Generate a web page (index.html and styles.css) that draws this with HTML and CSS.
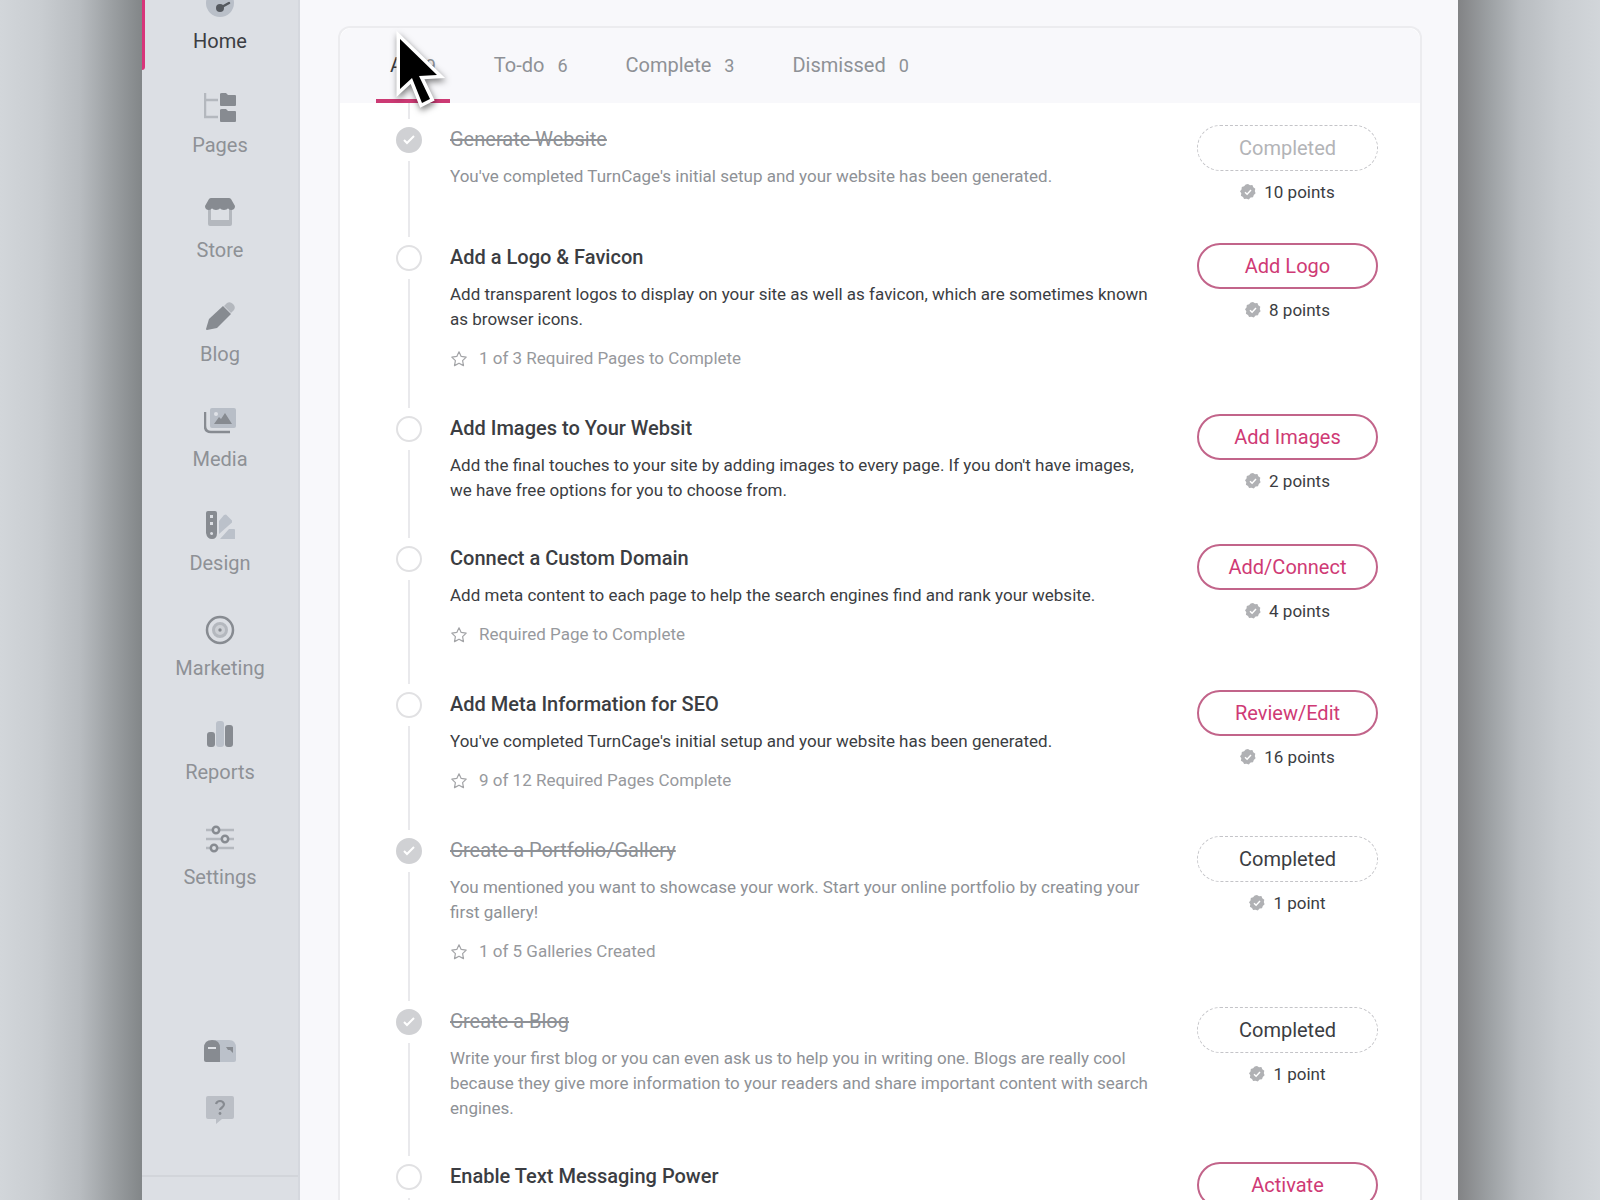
FILE: index.html
```
<!DOCTYPE html>
<html lang="en">
<head>
<meta charset="utf-8">
<title>TurnCage - Home</title>
<link rel="stylesheet" href="styles.css">
</head>

<body>

<!-- shared symbols -->
<svg class="defs" width="0" height="0">
<symbol id="badge" viewBox="0 0 16 16">
<path fill="#b0b1b4" d="M8 0l2 1.3 2.4-.2.9 2.2 2 1.4L14.800 7 15.600 9.300 13.800 10.900 13 13.200 10.600 13.600 8.800 15.500 6.500 14.700 4.100 15 3 12.900.9 11.700 1.300 9.300 0 7.300 1.500 5.400 1.800 3 4.100 2.200 5.700.5z"/>
<path fill="none" stroke="#fff" stroke-width="1.500" d="M5 8.200l2.100 2 3.900-4.100"/>
</symbol>
<symbol id="star" viewBox="0 0 18 18">
<path fill="none" stroke="#a3a4a7" stroke-width="1.200" stroke-linejoin="round" d="M9 1.800l2.200 4.600 5 .7-3.600 3.500.9 5L9 13.200l-4.500 2.400.9-5L1.800 7.100l5-.7z"/>
</symbol>
</svg>

<div class="app">

<div class="sidebar">
<nav class="nav">
<a href="#" class="active">
<svg width="32" height="32" viewBox="0 0 32 32"><circle cx="16" cy="16" r="14" fill="#b9bfc8"/><circle cx="16" cy="21" r="4" fill="#55595f"/><path d="M16 21l9-5" stroke="#55595f" stroke-width="2.500" stroke-linecap="round"/></svg>
<span>Home</span></a>
<a href="#">
<svg width="32" height="32" viewBox="0 0 32 32"><path d="M1 2v24h13M1 9h13" fill="none" stroke="#b4b8be" stroke-width="2.500"/><path fill="#878b91" d="M18 2h4l2 2h7q1 0 1 1v9q0 1-1 1H17q-1 0-1-1V3q0-1 2-1zM18 18h4l2 2h7q1 0 1 1v9q0 1-1 1H17q-1 0-1-1V19q0-1 2-1z"/></svg>
<span>Pages</span></a>
<a href="#">
<svg width="32" height="32" viewBox="0 0 32 32"><path fill="#b4b8be" fill-rule="evenodd" d="M4 12h24v16q0 2-2 2H6q-2 0-2-2zM7 13v11h18V13z"/><path fill="#878b91" d="M5 3q1-1 2-1h18q1 0 2 1l4 7q0 4-4 4-2 0-3-2-1 2-4 2-3 0-4-2-1 2-4 2-3 0-4-2-1 2-3 2-4 0-4-4z"/></svg>
<span>Store</span></a>
<a href="#">
<svg width="32" height="32" viewBox="0 0 32 32"><path fill="#b4b8be" d="M20 6l3-3q3-2 6 1 3 3 1 6l-3 3z"/><path fill="#878b91" d="M19 6l8 8-14 14-10 2q-1 0-1-1l3-10z"/></svg>
<span>Blog</span></a>
<a href="#">
<svg width="32" height="32" viewBox="0 0 32 32"><rect x="6" y="3" width="26" height="20" rx="2" fill="#b8bec7"/><circle cx="12" cy="9" r="2" fill="#dfe2e7"/><path fill="#878b91" d="M10 19l5-7 2 2 4-6 7 11z"/><path d="M1 7v14q0 6 6 6h19" fill="none" stroke="#878b91" stroke-width="2.500"/></svg>
<span>Media</span></a>
<a href="#">
<svg width="32" height="32" viewBox="0 0 32 32"><path fill="#bbc1ca" d="M15 12l5-6 2-.5 6 6v2L15 25zM16 30l9-10h5q1 0 1 1v9z"/><path fill="#878b91" fill-rule="evenodd" d="M4 2h7q2 0 2 2v20q0 6-5 6t-6-6V4q0-2 2-2zM6 6v3h3V6zM6 13v3h3v-3zM7.500 23a1.500 1.500 0 1 0 .1 3 1.500 1.500 0 1 0 0-3z"/></svg>
<span>Design</span></a>
<a href="#">
<svg width="32" height="32" viewBox="0 0 32 32"><circle cx="16" cy="16" r="13" fill="none" stroke="#878b91" stroke-width="2.500"/><circle cx="16" cy="16" r="6.500" fill="#cdd0d5" stroke="#b4b8be" stroke-width="3"/><circle cx="16" cy="16" r="1.700" fill="#878b91"/></svg>
<span>Marketing</span></a>
<a href="#">
<svg width="32" height="32" viewBox="0 0 32 32"><rect x="3" y="14" width="8" height="15" rx="3" fill="#878b91"/><rect x="12" y="3" width="8" height="26" rx="3" fill="#bbc1ca"/><rect x="21" y="7" width="8" height="22" rx="3" fill="#878b91"/></svg>
<span>Reports</span></a>
<a href="#">
<svg width="32" height="32" viewBox="0 0 32 32"><path stroke="#b4b8be" stroke-width="2.500" d="M2 7h28M2 16h28M2 25h28"/><g fill="#dcdfe4" stroke="#878b91" stroke-width="2.500"><circle cx="12" cy="7" r="3.200"/><circle cx="21" cy="16" r="3.200"/><circle cx="10" cy="25" r="3.200"/></g></svg>
<span>Settings</span></a>
</nav>

<div class="tools">
<a href="#" aria-label="Mailbox">
<svg width="32" height="26" viewBox="0 0 32 26"><path fill="#bbc1ca" d="M8 2h17q7 0 7 8v12q0 2-2 2H14z"/><path fill="#878b91" d="M0 10q0-8 8-8t8 8v14H2q-2 0-2-2z"/><path fill="#dfe2e7" d="M4 9h8v2H4z"/><path fill="#878b91" d="M22 9h7v6l-3-3h-2z"/></svg></a>
<a href="#" aria-label="Help">
<svg width="28" height="28" viewBox="0 0 28 28"><path fill="#bbbfc6" d="M2 0h24q2 0 2 2v19q0 2-2 2H16l-6 5v-5H2q-2 0-2-2V2q0-2 2-2z"/><path d="M10 8q1-3 4-3t4 3q0 2-2 3.500T14 14" fill="none" stroke="#878b91" stroke-width="2.200"/><circle cx="14" cy="17.500" r="1.400" fill="#878b91"/></svg></a>
</div>
<div class="account"></div>
</div>

<div class="main">
<div class="card">

<div class="tabs">
<a href="#" class="active">All <span>9</span></a>
<a href="#">To-do <span>6</span></a>
<a href="#">Complete <span>3</span></a>
<a href="#">Dismissed <span>0</span></a>
</div>

<ul class="tasks">
<li class="done">
<div class="mark"><i><svg width="12" height="10" viewBox="0 0 12 10"><path d="M1 5l3 3 7-7"/></svg></i></div>
<div class="text">
<h3>Generate Website</h3>
<p>You've completed TurnCage's initial setup and your website has been generated.</p>
</div>
<div class="action"><button type="button" class="completed" disabled>Completed</button>
<div class="points"><svg width="16" height="16"><use href="#badge"/></svg>10 points</div></div>
</li>

<li>
<div class="mark"><i></i></div>
<div class="text">
<h3>Add a Logo &amp; Favicon</h3>
<p>Add transparent logos to display on your site as well as favicon, which are sometimes known as browser icons.</p>
<div class="note"><svg width="18" height="18"><use href="#star"/></svg>1 of 3 Required Pages to Complete</div>
</div>
<div class="action"><button type="button">Add Logo</button>
<div class="points"><svg width="16" height="16"><use href="#badge"/></svg>8 points</div></div>
</li>

<li>
<div class="mark"><i></i></div>
<div class="text">
<h3>Add Images to Your Websit</h3>
<p>Add the final touches to your site by adding images to every page. If you don't have images, we have free options for you to choose from.</p>
</div>
<div class="action"><button type="button">Add Images</button>
<div class="points"><svg width="16" height="16"><use href="#badge"/></svg>2 points</div></div>
</li>

<li>
<div class="mark"><i></i></div>
<div class="text">
<h3>Connect a Custom Domain</h3>
<p>Add meta content to each page to help the search engines find and rank your website.</p>
<div class="note"><svg width="18" height="18"><use href="#star"/></svg>Required Page to Complete</div>
</div>
<div class="action"><button type="button">Add/Connect</button>
<div class="points"><svg width="16" height="16"><use href="#badge"/></svg>4 points</div></div>
</li>

<li>
<div class="mark"><i></i></div>
<div class="text">
<h3>Add Meta Information for SEO</h3>
<p>You've completed TurnCage's initial setup and your website has been generated.</p>
<div class="note"><svg width="18" height="18"><use href="#star"/></svg>9 of 12 Required Pages Complete</div>
</div>
<div class="action"><button type="button">Review/Edit</button>
<div class="points"><svg width="16" height="16"><use href="#badge"/></svg>16 points</div></div>
</li>

<li class="done">
<div class="mark"><i><svg width="12" height="10" viewBox="0 0 12 10"><path d="M1 5l3 3 7-7"/></svg></i></div>
<div class="text">
<h3>Create a Portfolio/Gallery</h3>
<p>You mentioned you want to showcase your work. Start your online portfolio by creating your first gallery!</p>
<div class="note"><svg width="18" height="18"><use href="#star"/></svg>1 of 5 Galleries Created</div>
</div>
<div class="action"><button type="button" class="completed">Completed</button>
<div class="points"><svg width="16" height="16"><use href="#badge"/></svg>1 point</div></div>
</li>

<li class="done">
<div class="mark"><i><svg width="12" height="10" viewBox="0 0 12 10"><path d="M1 5l3 3 7-7"/></svg></i></div>
<div class="text">
<h3>Create a Blog</h3>
<p>Write your first blog or you can even ask us to help you in writing one. Blogs are really cool because they give more information to your readers and share important content with search engines.</p>
</div>
<div class="action"><button type="button" class="completed">Completed</button>
<div class="points"><svg width="16" height="16"><use href="#badge"/></svg>1 point</div></div>
</li>

<li>
<div class="mark"><i></i></div>
<div class="text">
<h3>Enable Text Messaging Power</h3>
</div>
<div class="action"><button type="button">Activate</button></div>
</li>
</ul>

</div>
</div>

</div>

<svg class="cursor" width="56" height="84" viewBox="0 0 56 84"><path d="M7 9v50l12-11 10 25 8-4-11-23 18-1z"/></svg>

</body>
</html>
```

FILE: styles.css
```
* { box-sizing: border-box; }

body {
  margin: 0;
  height: 100vh;
  overflow: hidden;
  font-family: Roboto, Arial, sans-serif;
  font-size: 17px;
  color: #3b3d42;
  /* soft shade on both sides of the app */
  background: linear-gradient(90deg,
    #d2d6da 0, #c9cdd1 40px, #b8bcc0 80px, #9da1a4 110px, #828688 142px,
    #828385 calc(100% - 142px), #9da1a4 calc(100% - 110px), #b8bcc0 calc(100% - 80px),
    #c9cdd1 calc(100% - 40px), #d2d6da 100%);
}
a { color: inherit; text-decoration: none; }
.defs { position: absolute; }

.app {
  display: flex;
  height: 100vh;
  margin: 0 142px;
  background: #f8f8fb;
}

/* sidebar */
.sidebar {
  flex: 0 0 158px;
  display: flex;
  flex-direction: column;
  height: calc(100vh + 17px);
  margin-top: -17px;
  background: #dcdfe4;
  border-right: 2px solid #d5d8de;
}
.nav {
  flex: 1;
  display: grid;
  grid-auto-rows: 1fr;
}
.nav a {
  position: relative;
  display: flex;
  flex-direction: column;
  align-items: center;
  gap: 10px;
  padding-top: 4px;
  font-size: 20px;
  line-height: 24px;
  color: #8e9196;
}
.nav a.active { color: #3b3d42; }
.nav a.active:before {
  content: "";
  position: absolute;
  top: 0;
  left: 0;
  width: 3px;
  height: 87px;
  background: #d8357a;
  border-radius: 0 0 3px 0;
}
.tools {
  display: flex;
  flex-direction: column;
  align-items: center;
  gap: 32px;
  height: 252px;
  padding-top: 115px;
}
.tools a { display: flex; }
.account {
  height: 25px;
  border-top: 2px solid #d2d5da;
}

/* task card */
.main {
  flex: 1;
  padding: 26px 36px 0 38px;
}
.card {
  height: 100%;
  background: #fff;
  border: 2px solid #ececef;
  border-bottom: 0;
  border-radius: 12px 12px 0 0;
}
.tabs {
  display: flex;
  gap: 30px;
  height: 75px;
  padding-left: 36px;
  background: #f8f8fb;
  border-radius: 12px 12px 0 0;
}
.tabs a {
  padding: 0 14px;
  font-size: 20px;
  line-height: 74px;
  color: #8e9196;
}
.tabs a span {
  margin-left: 8px;
  font-size: 18px;
}
.tabs a.active {
  color: #3b3d42;
  border-bottom: 4px solid #cc3a74;
  border-radius: 4px 4px 0 0;
}
.tabs a.active span { color: #8e9196; }

.tasks {
  margin: 0;
  padding: 0 42px 0 56px;
  list-style: none;
}
.tasks li {
  display: flex;
  align-items: stretch;
}
.mark {
  flex: 0 0 26px;
  display: flex;
  flex-direction: column;
  align-items: center;
  gap: 8px;
  margin-right: 28px;
}
.mark:before,
.mark:after {
  content: "";
  width: 2px;
  background: #e9e9ec;
}
.mark:before { height: 16px; }
.mark:after { flex: 1; }
.mark i {
  display: flex;
  align-items: center;
  justify-content: center;
  width: 26px;
  height: 26px;
  border: 2px solid #e1e1e3;
  border-radius: 50%;
}
.done .mark i {
  background: #d0d1d4;
  border-color: #d0d1d4;
}
.mark path {
  fill: none;
  stroke: #fff;
  stroke-width: 2;
}

.text {
  flex: 0 1 704px;
  padding: 23px 0 19px;
}
.text h3 {
  margin: 0 0 12px;
  font-size: 20px;
  font-weight: 500;
  line-height: 26px;
}
.text p {
  margin: 0;
  line-height: 25px;
}
.note {
  display: flex;
  align-items: center;
  gap: 11px;
  margin-top: 12px;
  line-height: 29px;
  color: #97999d;
}
.done h3 {
  font-weight: 400;
  color: #8e9196;
  text-decoration: line-through;
}
.done p { color: #8e9196; }

.action {
  flex: 0 0 181px;
  margin-left: auto;
  padding-top: 22px;
}
.action button {
  width: 100%;
  height: 46px;
  padding: 0 0 1px;
  font: 20px Roboto, Arial, sans-serif;
  color: #cf3a75;
  background: #fff;
  border: 2px solid #c2648a;
  border-radius: 23px;
}
.action button.completed {
  color: #3b3d42;
  border: 1px dashed #c4c4c8;
}
.action button.completed:disabled { color: #b3b4b7; }
.points {
  display: flex;
  align-items: center;
  justify-content: center;
  gap: 8px;
  height: 22px;
  margin: 10px 0 18px;
}

/* mouse pointer */
.cursor {
  position: absolute;
  top: 30px;
  left: 393px;
  fill: #000;
  stroke: #fff;
  stroke-width: 7;
  stroke-miterlimit: 10;
  paint-order: stroke;
  filter: drop-shadow(1px 3px 3px rgba(0, 0, 0, 0.5));
}
```
